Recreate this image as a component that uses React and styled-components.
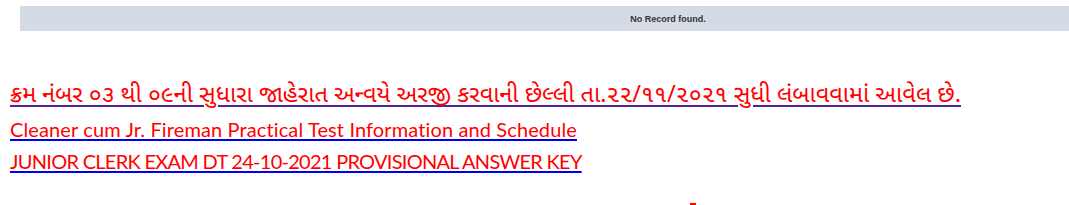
import styled, { createGlobalStyle } from "styled-components";

const Global = createGlobalStyle`
  html, body {
    margin: 0;
    padding: 0;
    background: #fff;
    overflow: hidden;
  }
  body {
    font-family: "Open Sans", "Noto Sans", sans-serif;
  }
`;

const Page = styled.div`
  width: 1069px;
  height: 205px;
  overflow: hidden;
  padding-top: 6px;
  box-sizing: border-box;
`;

const EmptyBar = styled.div`
  margin-left: 20px;
  width: 1296px;
  height: 25px;
  background: #d5dbe5;
  display: flex;
  align-items: center;
  justify-content: center;
  font-family: "Liberation Sans Narrow", "Liberation Sans", sans-serif;
  font-size: 9px;
  font-weight: bold;
  color: #333;
`;

const Notices = styled.div`
  padding: 50px 0 0 10px;
  display: flex;
  flex-direction: column;
  align-items: flex-start;
`;

const Notice = styled.a`
  display: block;
  width: fit-content;
  color: ${(p) => p.$line};
  text-decoration: underline;
  text-decoration-thickness: 2px;
  text-underline-offset: ${(p) => p.$offset}px;
  font-size: ${(p) => p.$size}px;
  letter-spacing: ${(p) => p.$spacing || 0}px;
  line-height: 32px;
  font-family: ${(p) => p.$font};
  white-space: nowrap;
  cursor: pointer;
`;

const Red = styled.span`
  color: #ff0000;
`;

const Tick = styled.div`
  margin: 26px 0 0 680px;
  width: 6px;
  height: 2px;
  background: #ff0000;
`;

const latin = '"Lato", sans-serif';

const App = () => {
  return (
    <>
      <Global />
      <Page>
        <EmptyBar>No Record found.</EmptyBar>
        <Notices>
          <Notice
            $line="#55238f"
            $size={23.5}
            $offset={3}
            $font={'"Noto Sans Gujarati", "Lohit Gujarati", "Noto Sans", sans-serif'}
          >
            <Red>
              ક્રમ નંબર ૦૩ થી ૦૯ની સુધારા જાહેરાત અન્વયે અરજી કરવાની છેલ્લી
              તા.૨૨/૧૧/૨૦૨૧ સુધી લંબાવવામાં આવેલ છે.
            </Red>
          </Notice>
          <Notice $line="#0000ee" $size={20} $offset={2} $spacing={0.12} $font={latin}>
            <Red>Cleaner cum Jr. Fireman Practical Test Information and Schedule</Red>
          </Notice>
          <Notice $line="#0000ee" $size={20} $offset={2} $spacing={-0.72} $font={latin}>
            <Red>JUNIOR CLERK EXAM DT 24-10-2021 PROVISIONAL ANSWER KEY</Red>
          </Notice>
          <Tick />
        </Notices>
      </Page>
    </>
  );
};

export default App;
